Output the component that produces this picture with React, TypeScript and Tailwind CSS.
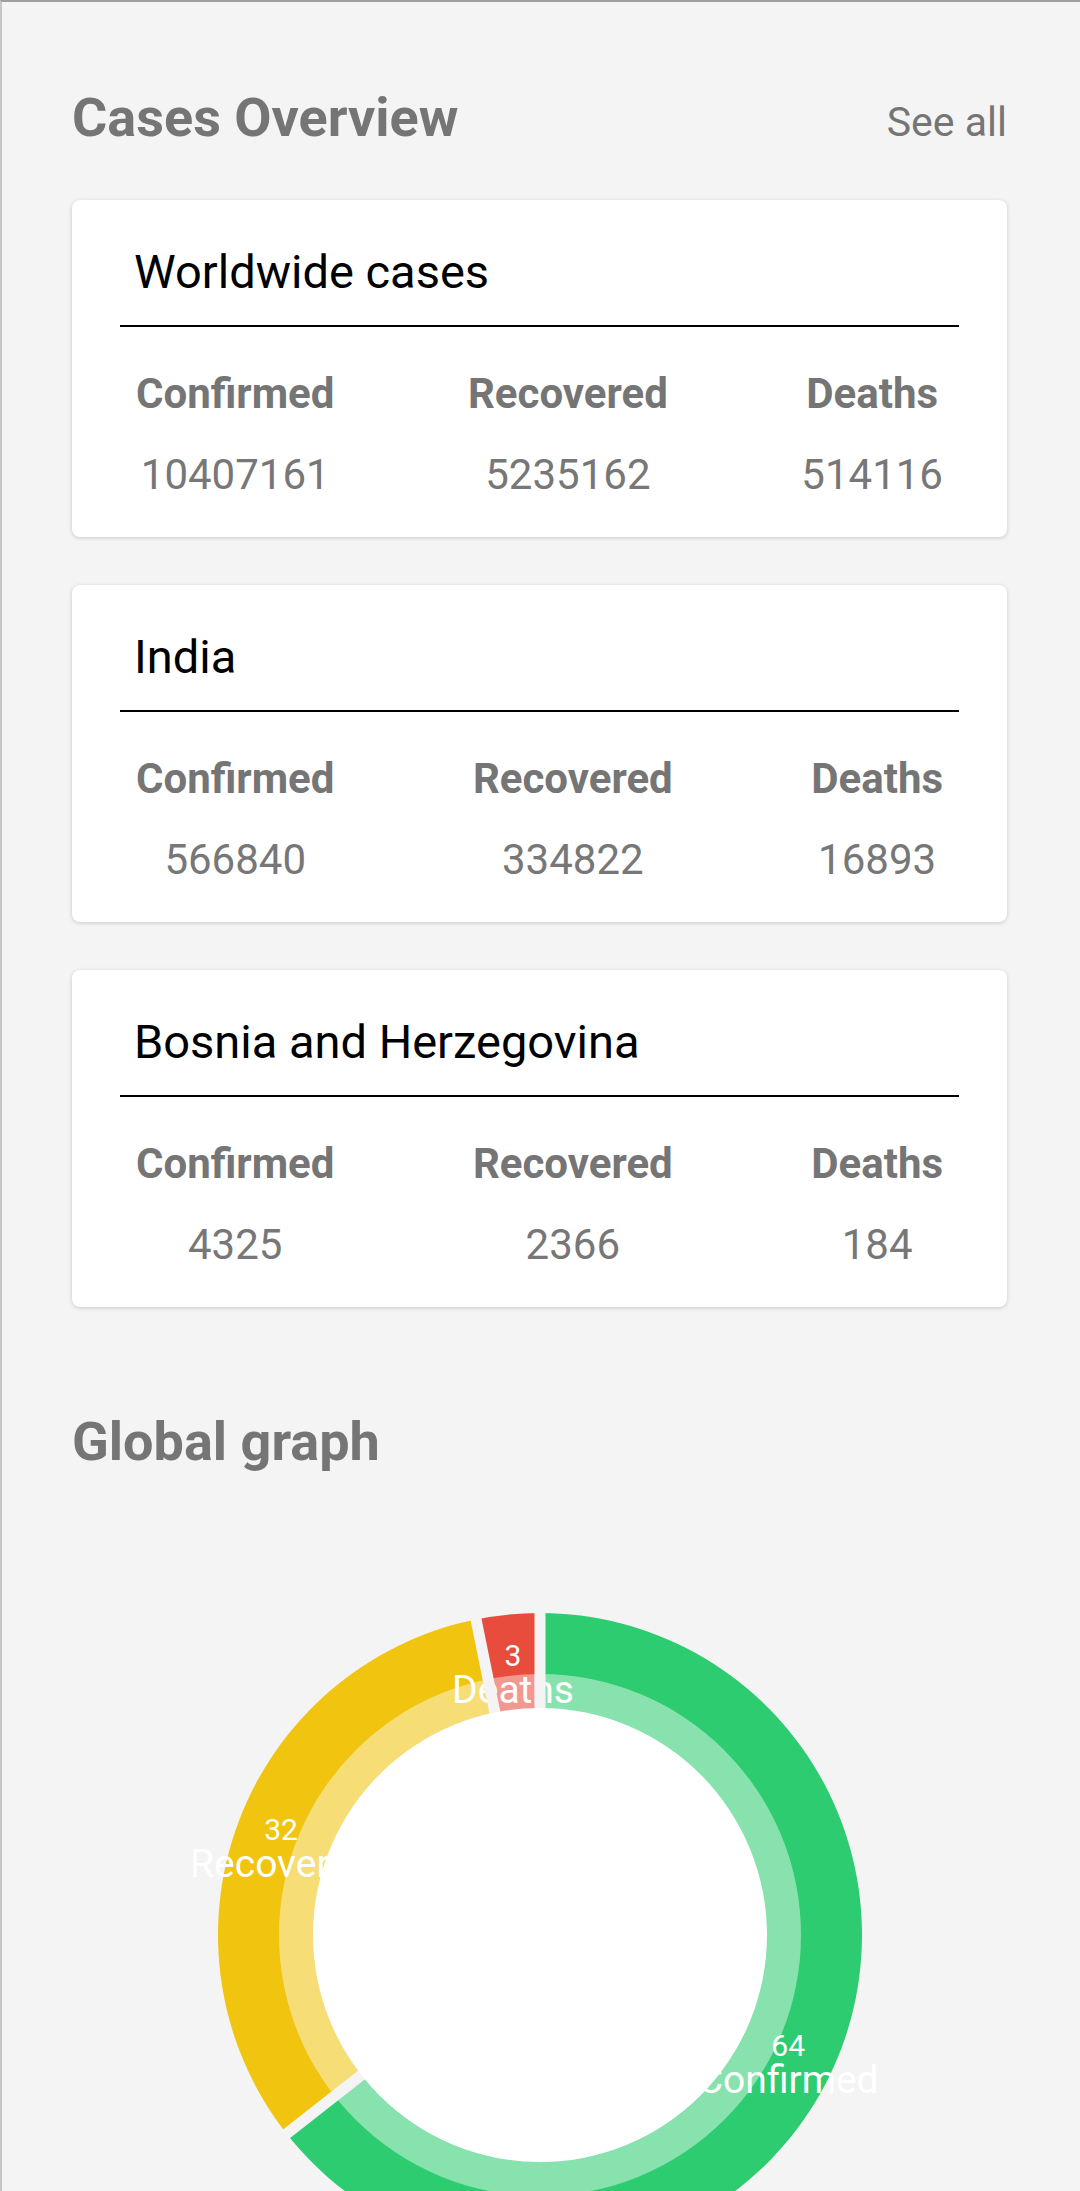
import * as React from 'react';

type CountryStats = {
  name: string;
  confirmed: number;
  recovered: number;
  deaths: number;
};

const stats: CountryStats[] = [
  { name: 'Worldwide cases', confirmed: 10407161, recovered: 5235162, deaths: 514116 },
  { name: 'India', confirmed: 566840, recovered: 334822, deaths: 16893 },
  { name: 'Bosnia and Herzegovina', confirmed: 4325, recovered: 2366, deaths: 184 },
];

function StatColumn({ label, value }: { label: string; value: number }) {
  return (
    <div className="flex flex-col items-center">
      <span className="text-[42px] leading-none font-bold text-[#757575]">{label}</span>
      <span className="mt-[39px] text-[42px] leading-none text-[#777777]">{value}</span>
    </div>
  );
}

function StatsCard({ name, confirmed, recovered, deaths }: CountryStats) {
  return (
    <div className="bg-white rounded-lg shadow-[0_1px_4px_rgba(0,0,0,0.18)] px-[48px] pt-[48px] pb-[41px]">
      <h2 className="pl-[14px] text-[47px] leading-none text-black">{name}</h2>
      <div className="mt-[30px] h-[2px] bg-black" />
      <div className="mt-[46px] flex justify-between px-[16px]">
        <StatColumn label="Confirmed" value={confirmed} />
        <StatColumn label="Recovered" value={recovered} />
        <StatColumn label="Deaths" value={deaths} />
      </div>
    </div>
  );
}

const CX = 468;
const CY = 466;
const R_OUT = 322;
const R_LIGHT = 261;
const R_HOLE = 227;

function pt(r: number, deg: number) {
  const a = (deg * Math.PI) / 180;
  return { x: CX + r * Math.sin(a), y: CY - r * Math.cos(a) };
}

function wedge(a0: number, a1: number) {
  const p0 = pt(R_OUT, a0);
  const p1 = pt(R_OUT, a1);
  const large = a1 - a0 > 180 ? 1 : 0;
  return `M ${CX} ${CY} L ${p0.x} ${p0.y} A ${R_OUT} ${R_OUT} 0 ${large} 1 ${p1.x} ${p1.y} Z`;
}

function GlobalDonut({ data }: { data: CountryStats }) {
  const total = data.confirmed + data.recovered + data.deaths;
  const slices = [
    { label: 'Confirmed', value: data.confirmed, color: '#2ecc71' },
    { label: 'Recovered', value: data.recovered, color: '#f1c40f' },
    { label: 'Deaths', value: data.deaths, color: '#e74c3c' },
  ];

  let start = 0;
  const arcs = slices.map((s) => {
    const sweep = (s.value / total) * 360;
    const arc = { ...s, a0: start, a1: start + sweep, pct: Math.round((s.value / total) * 100) };
    start += sweep;
    return arc;
  });

  return (
    <svg width="935" height="722" viewBox="0 0 935 722" className="block">
      {arcs.map((a) => (
        <path key={a.label} d={wedge(a.a0, a.a1)} fill={a.color} />
      ))}
      <circle cx={CX} cy={CY} r={R_LIGHT} fill="#ffffff" fillOpacity={0.43} />
      {arcs.map((a) => {
        // labels sit on the ring, a bit further out for the wide slices
        const p = pt(a.label === 'Deaths' ? 270 : 276, (a.a0 + a.a1) / 2);
        return (
          <g key={a.label} fill="#ffffff" fontFamily="Roboto, sans-serif" textAnchor="middle">
            <text x={p.x} y={p.y} fontSize="30">
              {a.pct}
            </text>
            <text x={p.x} y={p.y + 37} fontSize="39">
              {a.label}
            </text>
          </g>
        );
      })}
      {arcs.map((a) => {
        const p = pt(R_OUT + 10, a.a0);
        return (
          <line key={a.label} x1={CX} y1={CY} x2={p.x} y2={p.y} stroke="#f4f4f4" strokeWidth="11" />
        );
      })}
      <circle cx={CX} cy={CY} r={R_HOLE} fill="#ffffff" />
    </svg>
  );
}

export default function App() {
  return (
    <div className="min-h-[2191px] bg-[#f4f4f4] border-t-2 border-t-[#9e9e9e] border-l-2 border-l-[#c6c6c6] pl-[70px] pr-[73px] font-[Roboto,sans-serif] overflow-hidden">
      <div className="pt-[89px] flex items-baseline justify-between">
        <h1 className="text-[54px] leading-none font-bold text-[#757575]">Cases Overview</h1>
        <button className="text-[41px] leading-none text-[#757575]">See all</button>
      </div>

      <div className="mt-[55px] flex flex-col gap-[48px]">
        {stats.map((s) => (
          <StatsCard key={s.name} {...s} />
        ))}
      </div>

      <h1 className="mt-[108px] text-[54px] leading-none font-bold text-[#757575]">Global graph</h1>

      <GlobalDonut data={stats[0]} />
    </div>
  );
}
